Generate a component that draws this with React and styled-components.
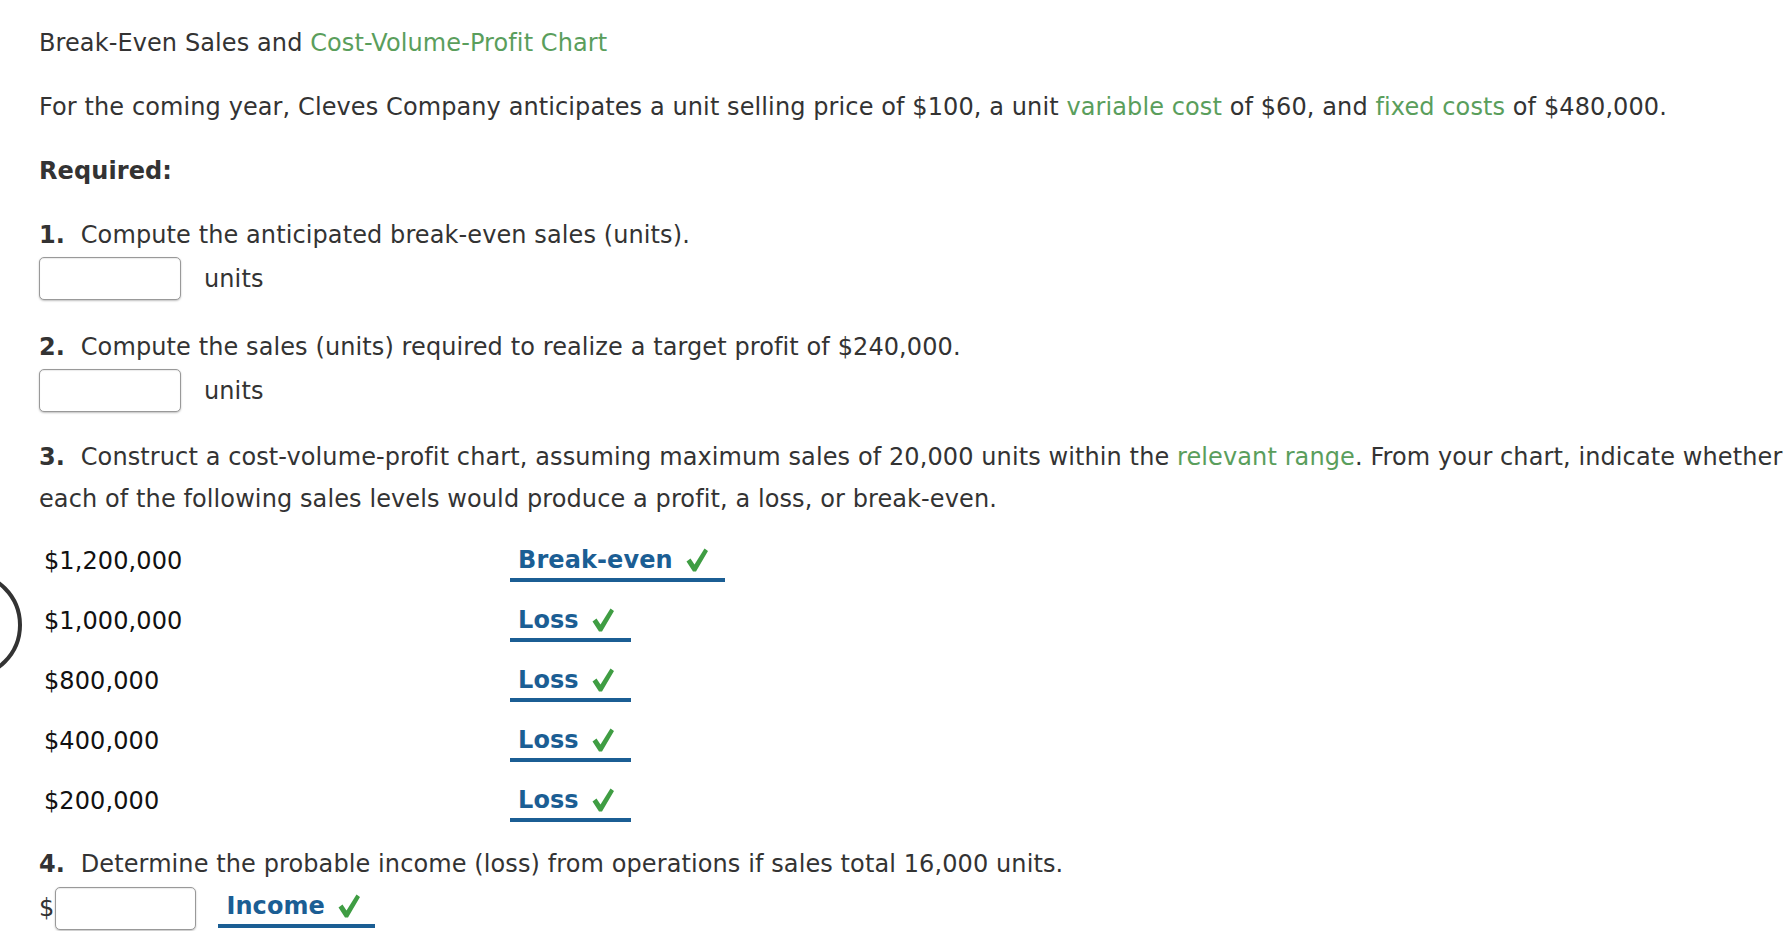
import React from 'react';
import styled, { createGlobalStyle } from 'styled-components';

const GlobalStyle = createGlobalStyle`
  html, body {
    margin: 0;
    padding: 0;
    background: #fff;
  }
  body {
    font-family: "DejaVu Sans", Verdana, sans-serif;
    color: #333;
  }
`;

const Page = styled.div`
  position: relative;
  box-sizing: border-box;
  width: 100%;
  padding: 22px 0 0 39px;
  font-size: 24px;
  letter-spacing: 0.1px;
  line-height: 42px;
  overflow: hidden;
`;

const Para = styled.p`
  margin: 0 0 ${(p) => (p.gap === undefined ? 22 : p.gap)}px 0;
  white-space: nowrap;
`;

const Green = styled.span`
  color: #5a9e5c;
`;

const Strong = styled.strong`
  font-weight: bold;
`;

const Num = styled.strong`
  font-weight: bold;
  margin-right: 8px;
`;

const AnswerRow = styled.div`
  display: flex;
  align-items: center;
  height: ${(p) => p.h || 45}px;
  margin-bottom: ${(p) => p.mb || 0}px;
`;

const Input = styled.div`
  width: ${(p) => p.w || 142}px;
  height: 43px;
  box-sizing: border-box;
  border: 1px solid #999;
  border-radius: 5px;
  box-shadow: 0 1px 2px rgba(0, 0, 0, 0.25), inset 0 1px 1px rgba(0, 0, 0, 0.08);
  background: #fff;
`;

const Unit = styled.span`
  margin-left: 23px;
`;

const Table = styled.div`
  display: grid;
  grid-template-columns: 471px auto;
  grid-auto-rows: 60px;
  margin: 11px 0 12px 0;
  width: 900px;
`;

const Amount = styled.div`
  padding-left: 5px;
  color: #111;
  display: flex;
  align-items: center;
`;

const Cell = styled.div`
  display: flex;
  align-items: center;
  padding-top: 2px;
`;

const Select = styled.span`
  display: inline-flex;
  align-items: center;
  gap: ${(p) => p.gap || 12}px;
  height: 36px;
  padding: 0 ${(p) => p.pr || 16}px 0 8px;
  margin-left: ${(p) => p.ml || 0}px;
  border-bottom: 4px solid #1b5e94;
  color: #1b5e94;
  font-weight: bold;
  line-height: 1;
`;

const Dollar = styled.span`
  color: #333;
  margin-right: 1px;
`;

const Ring = styled.svg`
  position: absolute;
  left: 0;
  top: 580px;
`;

const Check = () => (
  <svg width="24" height="26" viewBox="0 0 24 26">
    <path
      d="M1.5 14.5 L5.5 11.5 L9.5 17.5 L19.5 1.5 L23 4 L11 24.5 L8 24.5 Z"
      fill="#3f9d43"
    />
  </svg>
);

const Answer = ({ label, ...rest }) => (
  <Select {...rest}>
    {label}
    <Check />
  </Select>
);

const rows = [
  ['$1,200,000', 'Break-even'],
  ['$1,000,000', 'Loss'],
  ['$800,000', 'Loss'],
  ['$400,000', 'Loss'],
  ['$200,000', 'Loss'],
];

export default function App() {
  return (
    <>
      <GlobalStyle />
      <Page>
        <Para>
          Break-Even Sales and <Green>Cost-Volume-Profit Chart</Green>
        </Para>
        <Para>
          For the coming year, Cleves Company anticipates a unit selling price of $100, a unit{' '}
          <Green>variable cost</Green> of $60, and <Green>fixed costs</Green> of $480,000.
        </Para>
        <Para>
          <Strong>Required:</Strong>
        </Para>
        <Para gap={0}>
          <Num>1.</Num> Compute the anticipated break-even sales (units).
        </Para>
        <AnswerRow mb={25}>
          <Input />
          <Unit>units</Unit>
        </AnswerRow>
        <Para gap={0}>
          <Num>2.</Num> Compute the sales (units) required to realize a target profit of $240,000.
        </Para>
        <AnswerRow mb={23}>
          <Input />
          <Unit>units</Unit>
        </AnswerRow>
        <Para gap={0}>
          <Num>3.</Num> Construct a cost-volume-profit chart, assuming maximum sales of 20,000 units within the{' '}
          <Green>relevant range</Green>. From your chart, indicate whether
          <br />
          each of the following sales levels would produce a profit, a loss, or break-even.
        </Para>
        <Table>
          {rows.map(([amt, ans]) => (
            <React.Fragment key={amt}>
              <Amount>{amt}</Amount>
              <Cell>
                <Answer label={ans} />
              </Cell>
            </React.Fragment>
          ))}
        </Table>
        <Para gap={0}>
          <Num>4.</Num> Determine the probable income (loss) from operations if sales total 16,000 units.
        </Para>
        <AnswerRow h={46}>
          <Dollar>$</Dollar>
          <Input w={141} />
          <Answer label="Income" ml={22} pr={14} />
        </AnswerRow>
        <Ring width="24" height="90" viewBox="0 0 24 90">
          <circle cx="-32" cy="45" r="52" fill="none" stroke="#333" strokeWidth="4" />
        </Ring>
      </Page>
    </>
  );
}
